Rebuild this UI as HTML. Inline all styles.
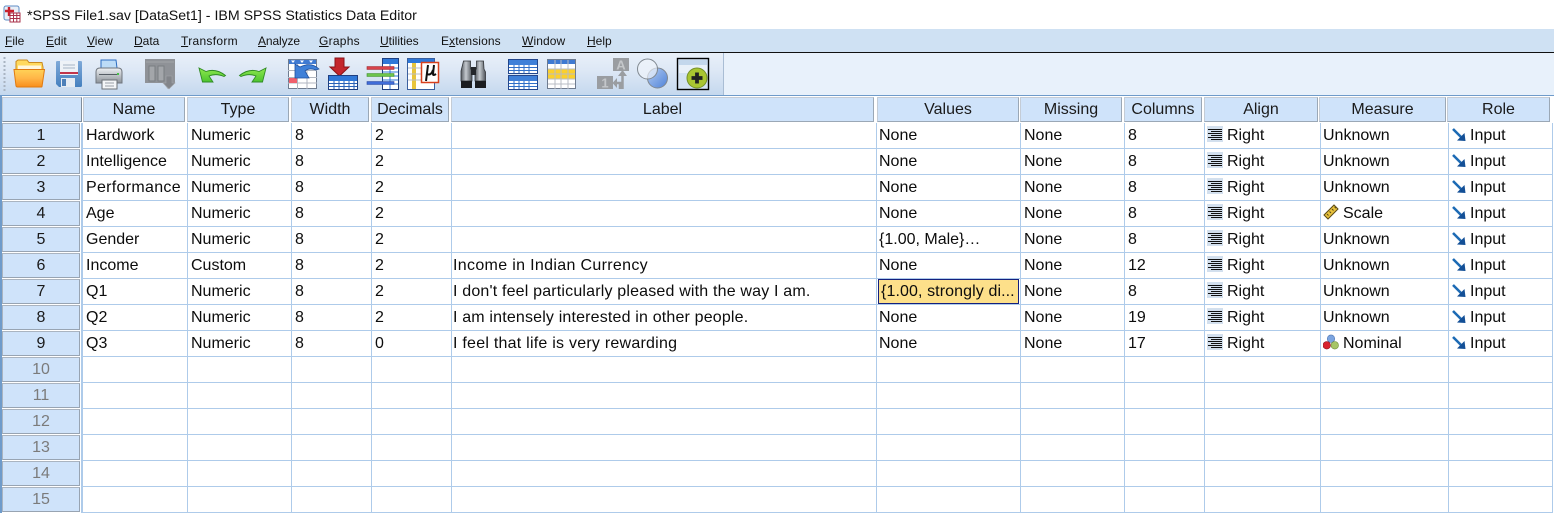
<!DOCTYPE html>
<html><head><meta charset="utf-8"><title>*SPSS File1.sav [DataSet1] - IBM SPSS Statistics Data Editor</title>
<style>
html,body{margin:0;padding:0;width:1554px;height:513px;overflow:hidden;background:#fff;font-family:"Liberation Sans",sans-serif;color:#000}
#title{position:absolute;left:27px;top:7px;font-size:14.18px;line-height:18px;white-space:nowrap;color:#111}
#menu{position:absolute;left:0;top:29px;width:1554px;height:23px;background:#cfe1f3}
#menu span{position:absolute;top:5px;font-size:12px;line-height:15px;white-space:nowrap;color:#111}
#line{position:absolute;left:0;top:52px;width:1554px;height:1px;background:#111}
#tbg{position:absolute;left:0;top:53px;width:1554px;height:42px;background:#e8f1fb}
#tb{position:absolute;left:0;top:53px;width:723px;height:42px;background:linear-gradient(#e9f0f9,#dce7f5 45%,#c5d8ee);border-right:1px solid #a9bdd4}
#tline{position:absolute;left:0;top:95px;width:1554px;height:1px;background:#6f9bca}
#ic{position:absolute;left:0;top:0;width:1554px;height:96px}
table{position:absolute;left:0;top:96px;border-collapse:separate;border-spacing:0;table-layout:fixed;width:1553px;font-size:16px}
td,th{padding:0;height:25px;border-right:1px solid #aecbea;border-bottom:1px solid #aecbea;font-weight:normal;white-space:nowrap;overflow:hidden;line-height:25px;text-align:left;box-sizing:content-box}
tr.h td{height:27px;border:0;padding:0}
td>span{padding-left:3px;display:block;color:#0c0c0c}
td.l>span{padding-left:1px}
td.v>span{padding-left:2px}
td.m>span{padding-left:2px}
.hc{position:absolute;top:97px;box-sizing:border-box;height:25px;background:#cfe3fa;border:1px solid #9ba8b6;border-top-color:#c4ccd6;border-left-color:#c4ccd6;text-align:center;line-height:24px;color:#1a1a1a;font-size:16px}
.rh{box-sizing:border-box;height:25px;margin:0 1px 0 2px;background:#cfe3fa;border:1px solid #98a4b2;border-top-color:#aab4c0;border-left-color:#aab4c0;text-align:center;line-height:23px;color:#1a1a1a}
.rh.e{color:#7b7b7b}
th.r{border-right:2px solid #aecbea;border-bottom:0;background:#fff;height:26px;vertical-align:top}
#bl{position:absolute;left:0;top:96px;width:2px;height:417px;background:#6f9bca}
td>span.sel{box-sizing:border-box;display:block;height:25px;margin:0 1px 0 1px;padding-left:2px;background:#fde08a;border:1px solid #14207e;line-height:23px;white-space:nowrap;overflow:hidden;letter-spacing:.1px}
.i{display:inline-block;vertical-align:-2px;margin-right:4px}
.a{margin-left:-1px}
u{text-decoration:underline}
</style></head><body>
<svg width="0" height="0" style="position:absolute"><defs>
<symbol id="al" viewBox="0 0 16 16"><rect width="16" height="16" fill="#d3e0ee"/><path d="M1 3.500H15M4 5.500H15M1 7.500H15M4 9.500H15M1 11.500H15M4 13.500H15" stroke="#111" stroke-width="1" fill="none"/></symbol>
<symbol id="ro" viewBox="0 0 14 14"><path d="M1 1 9.500 9.500" stroke="#1c6ab4" stroke-width="2.600" fill="none"/><path d="M13.500 13 L5 12.500 L12.500 5Z" fill="#134f96"/></symbol>
<symbol id="sc" viewBox="0 0 16 16"><path d="M1 11 11 1 15 5 5 15Z" fill="#e8c23c" stroke="#5a4a18" stroke-width="1"/><path d="M4 10 5.500 11.500M6.500 7.500 8 9M9 5 10.500 6.500M11.500 2.800 13 4.300" stroke="#5a4a18" stroke-width="1"/></symbol>
<symbol id="no" viewBox="0 0 17 16"><circle cx="8.500" cy="4.500" r="4" fill="#7ba4e0" stroke="#4f74ad" stroke-width=".6"/><circle cx="4" cy="11.500" r="4" fill="#d8222e" stroke="#8f1820" stroke-width=".6"/><circle cx="12.500" cy="11.500" r="4" fill="#a6c566" stroke="#6f8c3c" stroke-width=".6"/></symbol>
</defs></svg>

<svg style="position:absolute;left:3px;top:5px" width="18" height="18" viewBox="0 0 18 18">
<rect x="1" y="1" width="15" height="14" rx="2" fill="#e9eff7" stroke="#5f8dc4"/><path d="M6 2V11M2 6H11" stroke="#c8202e" stroke-width="2.400"/>
<rect x="7" y="8" width="10" height="9" fill="#fff" stroke="#a8304a"/><path d="M7 10.500H17M7 13.500H17M10.500 8V17M13.800 8V17" stroke="#a8304a"/></svg>
<div id="title">*SPSS File1.sav [DataSet1] - IBM SPSS Statistics Data Editor</div>

<div id="menu">
<span style="left:5px"><u>F</u>ile</span>
<span style="left:46px"><u>E</u>dit</span>
<span style="left:87px"><u>V</u>iew</span>
<span style="left:134px"><u>D</u>ata</span>
<span style="left:181px;letter-spacing:.3px"><u>T</u>ransform</span>
<span style="left:258px;letter-spacing:-.1px"><u>A</u>nalyze</span>
<span style="left:319px;letter-spacing:.25px"><u>G</u>raphs</span>
<span style="left:380px"><u>U</u>tilities</span>
<span style="left:441px;letter-spacing:.1px">E<u>x</u>tensions</span>
<span style="left:522px;letter-spacing:.1px"><u>W</u>indow</span>
<span style="left:587px"><u>H</u>elp</span>
</div>
<div id="line"></div><div id="tbg"></div><div id="tb"></div><div id="tline"></div>

<svg id="ic" viewBox="0 0 1554 96">
<defs>
<linearGradient id="fo" x1="0" y1="0" x2="0" y2="1"><stop offset="0" stop-color="#ffd257"/><stop offset=".5" stop-color="#ffb648"/><stop offset="1" stop-color="#f98e1c"/></linearGradient>
<linearGradient id="sv" x1="0" y1="0" x2="0" y2="1"><stop offset="0" stop-color="#7fa9d8"/><stop offset="1" stop-color="#4580bf"/></linearGradient>
<linearGradient id="gr" x1="0" y1="0" x2="0" y2="1"><stop offset="0" stop-color="#8fe84e"/><stop offset="1" stop-color="#4cc42e"/></linearGradient>
<linearGradient id="gy" x1="0" y1="0" x2="0" y2="1"><stop offset="0" stop-color="#eef1f4"/><stop offset="1" stop-color="#8c9299"/></linearGradient>
<linearGradient id="bi" x1="0" y1="0" x2="1" y2="0"><stop offset="0" stop-color="#555a60"/><stop offset=".45" stop-color="#c4c9ce"/><stop offset="1" stop-color="#50555b"/></linearGradient>
<linearGradient id="ci" x1="0" y1="0" x2="1" y2="1"><stop offset="0" stop-color="#b4cdf3"/><stop offset="1" stop-color="#4f82d8"/></linearGradient>
</defs>
<!-- grip -->
<path d="M4.500 57V92" stroke="#a9b4c2" stroke-width="2" stroke-dasharray="2 2"/>
<!-- folder -->
<path d="M16 66V61.500L18 60H27L29 62.500H42L43 67V72H16Z" fill="#ffd95e" stroke="#c98a20"/>
<path d="M18 65.500H41V72H18Z" fill="#fff6dc"/>
<path d="M14 69.500H44.500L42 86.500Q42 87 41 87H17.500Q16.500 87 16 86Z" fill="url(#fo)" stroke="#e07a10"/>
<!-- save -->
<path d="M56 62Q56 61 57.500 61H80.500Q82 61 82 62V85.500Q82 87 80.500 87H59L56 84Z" fill="url(#sv)"/>
<rect x="60" y="61" width="18" height="14" fill="#eef2f7"/>
<path d="M60 73H78" stroke="#c2354b" stroke-width="2"/><path d="M63 65H75M63 68H75" stroke="#a6b4c6"/>
<rect x="61" y="78" width="14" height="9" fill="#e6ecf3"/><rect x="62" y="79" width="4" height="7" fill="#4d7fb8"/>
<!-- printer -->
<path d="M101 68V60H116L117 68Z" fill="#bcdcf7" stroke="#2b6cc0"/>
<path d="M96 72Q96 68 100 68H118Q122 68 122 72V83H96Z" fill="url(#gy)" stroke="#70767e"/>
<path d="M99 74.500H119" stroke="#555c64"/><rect x="117" y="73" width="2" height="2" fill="#47c24a"/>
<rect x="102" y="80" width="15" height="9" fill="#f4f6f8" stroke="#6d7379"/><path d="M105 83H114M105 86H114" stroke="#9aa0a8"/>
<!-- grayed variable -->
<path d="M145 59H175V83H173L168 89 163 83H145Z" fill="#8f9297"/>
<rect x="149" y="66" width="6" height="15" fill="#a3a6aa" stroke="#7a7d82"/><rect x="158" y="66" width="6" height="15" fill="#a3a6aa" stroke="#7a7d82"/>
<path d="M146 62H174" stroke="#a3a6aa"/><path d="M166 76H172V83H175L169 89 163 83H166Z" fill="#82858a" stroke="#a3a6aa" stroke-width=".6"/>
<!-- undo / redo -->
<path d="M199 68 L206 71.500 Q216 68 225.500 75.500 L224 76.500 Q216 73 209 76 L213 82 L202.500 82 Z" fill="url(#gr)" stroke="#2f8a24" stroke-width=".9"/>
<path d="M266 68 L259 71.500 Q249 68 239.500 75.500 L241 76.500 Q249 73 256 76 L252 82 L262.500 82 Z" fill="url(#gr)" stroke="#2f8a24" stroke-width=".9"/>
<!-- go to data -->
<rect x="288.500" y="59.500" width="28" height="29" fill="#fff" stroke="#6f7c90"/>
<rect x="289" y="60" width="27" height="4" fill="#3f7ad2"/>
<path d="M291 60.500H295L293 63ZM300 60.500H304L302 63ZM309 60.500H313L311 63Z" fill="#fff"/>
<path d="M288 70.500H317M288 77.500H317M288 83H317M297.500 64V89M307 64V89" stroke="#b0b6c0"/>
<rect x="289" y="78" width="8" height="5" fill="#f0606c"/>
<path d="M295 64 L300 67 Q311 61.500 319 69 L316 70 Q309 67.500 305 71 L309 78 L295 78 Z" fill="#3f80d8" stroke="#1f4f9c" stroke-width=".8"/>
<!-- import arrow -->
<path d="M335 58H344V67H349L339.500 76 330 67H335Z" fill="#c4262c" stroke="#8a1218"/>
<rect x="328.500" y="75.500" width="29" height="14" fill="#fff" stroke="#1f3f80"/>
<rect x="329" y="76" width="28" height="5" fill="#2f78d8"/>
<path d="M329 83.500H357M329 86.500H357M334 81V89M339 81V89M344 81V89M349 81V89M354 81V89" stroke="#2a62b8"/>
<!-- variables -->
<rect x="382.500" y="58.500" width="16" height="31" fill="#fff" stroke="#1f3f80"/>
<rect x="383" y="59" width="15" height="5" fill="#2f78d8"/>
<path d="M383 68H398M383 72H398M383 76H398M383 80H398M383 84H398M390 64V89" stroke="#2f78d8"/>
<path d="M367 66.500H394V69.500H367Z" fill="#d8424a" stroke="#9a2a30" stroke-width=".6"/><path d="M367 73.500H394V76.500H367Z" fill="#6cc44c" stroke="#3f8a2c" stroke-width=".6"/><path d="M367 81.500H394V84.500H367Z" fill="#3f6cd8" stroke="#2a479c" stroke-width=".6"/>
<!-- mu -->
<rect x="407.500" y="58.500" width="27" height="31" fill="#fff" stroke="#3a5f9e"/>
<rect x="408" y="59" width="26" height="4" fill="#2f78d8"/>
<rect x="412" y="63" width="4" height="26" fill="#e8c53c"/><path d="M408 68H421M408 74H421M408 80H421" stroke="#b7bdc6"/>
<rect x="421.500" y="62.500" width="17" height="20" fill="#fff" stroke="#d8401c" stroke-width="1.500"/>
<path d="M428 65 426 81M427 74Q431 76 433 70M434 65 433 74Q433 76 436 74" stroke="#111" stroke-width="2" fill="none"/>
<!-- binoculars -->
<path d="M463.500 61H470.500V69H472V81H461V71Z" fill="url(#bi)" stroke="#33363a" stroke-width=".8"/>
<path d="M476.500 61H483.500L484 69 485.500 72V81H475V69H476.500Z" fill="url(#bi)" stroke="#33363a" stroke-width=".8"/>
<rect x="471" y="67" width="5" height="8" fill="#24272b"/><rect x="461" y="81" width="11" height="7" fill="#1c1d20"/><rect x="475" y="81" width="11" height="7" fill="#1c1d20"/>
<!-- split -->
<g stroke="#24478c"><rect x="508.500" y="59.500" width="29" height="14" fill="#fff"/><rect x="508.500" y="75.500" width="29" height="14" fill="#fff"/></g>
<rect x="509" y="60" width="28" height="5" fill="#3f80d8"/><rect x="509" y="76" width="28" height="5" fill="#3f80d8"/>
<path d="M509 67.500H537M509 70.500H537M509 83.500H537M509 86.500H537M514 65V73M519 65V73M524 65V73M529 65V73M514 81V89M519 81V89M524 81V89M529 81V89" stroke="#2f6fc8"/>
<!-- select -->
<rect x="547.500" y="59.500" width="28" height="29" fill="#fff" stroke="#6f7c90"/>
<rect x="548" y="60" width="27" height="4" fill="#3f7ad2"/>
<rect x="548" y="69" width="27" height="10" fill="#fbd02c"/>
<path d="M548 69H575M548 74H575M548 79H575M548 84H575M555 60V89M561 60V89M568 60V89" stroke="#b8bcc4"/>
<!-- grayed 1A -->
<rect x="613" y="58" width="16" height="13" fill="#9a9da1"/>
<text x="621" y="69.500" text-anchor="middle" font-family="Liberation Sans" font-weight="bold" font-size="13" fill="#c4c7ca">A</text>
<rect x="597" y="76" width="16" height="13" fill="#9a9da1"/>
<text x="605" y="87.500" text-anchor="middle" font-family="Liberation Sans" font-weight="bold" font-size="13" fill="#c4c7ca">1</text>
<path d="M622.500 89V74M620 89V83H616" stroke="#9a9da1" stroke-width="2.500" fill="none"/>
<path d="M618 76 622.500 70 627 76ZM617 78 612.500 83 617 88Z" fill="#9a9da1"/>
<!-- circles -->
<circle cx="657.500" cy="78" r="10" fill="url(#ci)" stroke="#808890"/>
<circle cx="647.500" cy="69" r="10" fill="#f0f4fa" fill-opacity=".65" stroke="#808890"/>
<!-- add-on -->
<rect x="677.500" y="58.500" width="31" height="31" fill="#d3e2f3" stroke="#000" stroke-width="1.400"/>
<rect x="679" y="60" width="28" height="5" fill="#c3d7ec"/><rect x="679" y="65" width="28" height="8" fill="#e8f0f9"/>
<circle cx="697" cy="78" r="10" fill="#a9c531" stroke="#75902a"/>
<path d="M697 72.500V83.500M691.500 78H702.500" stroke="#222" stroke-width="3.800"/>
</svg>

<table>
<colgroup><col style="width:83px"><col style="width:105px"><col style="width:104px"><col style="width:80px"><col style="width:80px"><col style="width:425px"><col style="width:144px"><col style="width:104px"><col style="width:80px"><col style="width:116px"><col style="width:128px"><col style="width:104px"></colgroup>
<tr class="h"><td colspan="12"></td></tr>

<tr><th class="r"><div class="rh">1</div></th><td><span>Hardwork</span></td><td><span>Numeric</span></td><td><span>8</span></td><td><span>2</span></td><td class="l"><span></span></td><td class="v"><span>None</span></td><td><span>None</span></td><td><span>8</span></td><td><span><svg class="i a" width="16" height="16"><use href="#al"/></svg>Right</span></td><td class="m"><span>Unknown</span></td><td><span><svg class="i" width="14" height="14"><use href="#ro"/></svg>Input</span></td></tr>
<tr><th class="r"><div class="rh">2</div></th><td><span>Intelligence</span></td><td><span>Numeric</span></td><td><span>8</span></td><td><span>2</span></td><td class="l"><span></span></td><td class="v"><span>None</span></td><td><span>None</span></td><td><span>8</span></td><td><span><svg class="i a" width="16" height="16"><use href="#al"/></svg>Right</span></td><td class="m"><span>Unknown</span></td><td><span><svg class="i" width="14" height="14"><use href="#ro"/></svg>Input</span></td></tr>
<tr><th class="r"><div class="rh">3</div></th><td><span style="letter-spacing:.3px">Performance</span></td><td><span>Numeric</span></td><td><span>8</span></td><td><span>2</span></td><td class="l"><span></span></td><td class="v"><span>None</span></td><td><span>None</span></td><td><span>8</span></td><td><span><svg class="i a" width="16" height="16"><use href="#al"/></svg>Right</span></td><td class="m"><span>Unknown</span></td><td><span><svg class="i" width="14" height="14"><use href="#ro"/></svg>Input</span></td></tr>
<tr><th class="r"><div class="rh">4</div></th><td><span>Age</span></td><td><span>Numeric</span></td><td><span>8</span></td><td><span>2</span></td><td class="l"><span></span></td><td class="v"><span>None</span></td><td><span>None</span></td><td><span>8</span></td><td><span><svg class="i a" width="16" height="16"><use href="#al"/></svg>Right</span></td><td class="m"><span><svg class="i" width="16" height="16"><use href="#sc"/></svg>Scale</span></td><td><span><svg class="i" width="14" height="14"><use href="#ro"/></svg>Input</span></td></tr>
<tr><th class="r"><div class="rh">5</div></th><td><span>Gender</span></td><td><span>Numeric</span></td><td><span>8</span></td><td><span>2</span></td><td class="l"><span></span></td><td class="v"><span>{1.00, Male}…</span></td><td><span>None</span></td><td><span>8</span></td><td><span><svg class="i a" width="16" height="16"><use href="#al"/></svg>Right</span></td><td class="m"><span>Unknown</span></td><td><span><svg class="i" width="14" height="14"><use href="#ro"/></svg>Input</span></td></tr>
<tr><th class="r"><div class="rh">6</div></th><td><span>Income</span></td><td><span>Custom</span></td><td><span>8</span></td><td><span>2</span></td><td class="l"><span style="letter-spacing:.33px">Income in Indian Currency</span></td><td class="v"><span>None</span></td><td><span>None</span></td><td><span>12</span></td><td><span><svg class="i a" width="16" height="16"><use href="#al"/></svg>Right</span></td><td class="m"><span>Unknown</span></td><td><span><svg class="i" width="14" height="14"><use href="#ro"/></svg>Input</span></td></tr>
<tr><th class="r"><div class="rh">7</div></th><td><span>Q1</span></td><td><span>Numeric</span></td><td><span>8</span></td><td><span>2</span></td><td class="l"><span style="letter-spacing:.18px">I don't feel particularly pleased with the way I am.</span></td><td class="v"><span class="sel">{1.00, strongly di...</span></td><td><span>None</span></td><td><span>8</span></td><td><span><svg class="i a" width="16" height="16"><use href="#al"/></svg>Right</span></td><td class="m"><span>Unknown</span></td><td><span><svg class="i" width="14" height="14"><use href="#ro"/></svg>Input</span></td></tr>
<tr><th class="r"><div class="rh">8</div></th><td><span>Q2</span></td><td><span>Numeric</span></td><td><span>8</span></td><td><span>2</span></td><td class="l"><span style="letter-spacing:.17px">I am intensely interested in other people.</span></td><td class="v"><span>None</span></td><td><span>None</span></td><td><span>19</span></td><td><span><svg class="i a" width="16" height="16"><use href="#al"/></svg>Right</span></td><td class="m"><span>Unknown</span></td><td><span><svg class="i" width="14" height="14"><use href="#ro"/></svg>Input</span></td></tr>
<tr><th class="r"><div class="rh">9</div></th><td><span>Q3</span></td><td><span>Numeric</span></td><td><span>8</span></td><td><span>0</span></td><td class="l"><span style="letter-spacing:.24px">I feel that life is very rewarding</span></td><td class="v"><span>None</span></td><td><span>None</span></td><td><span>17</span></td><td><span><svg class="i a" width="16" height="16"><use href="#al"/></svg>Right</span></td><td class="m"><span><svg class="i" width="16" height="16"><use href="#no"/></svg>Nominal</span></td><td><span><svg class="i" width="14" height="14"><use href="#ro"/></svg>Input</span></td></tr>
<tr><th class="r"><div class="rh e">10</div></th><td></td><td></td><td></td><td></td><td></td><td></td><td></td><td></td><td></td><td></td><td></td></tr>
<tr><th class="r"><div class="rh e">11</div></th><td></td><td></td><td></td><td></td><td></td><td></td><td></td><td></td><td></td><td></td><td></td></tr>
<tr><th class="r"><div class="rh e">12</div></th><td></td><td></td><td></td><td></td><td></td><td></td><td></td><td></td><td></td><td></td><td></td></tr>
<tr><th class="r"><div class="rh e">13</div></th><td></td><td></td><td></td><td></td><td></td><td></td><td></td><td></td><td></td><td></td><td></td></tr>
<tr><th class="r"><div class="rh e">14</div></th><td></td><td></td><td></td><td></td><td></td><td></td><td></td><td></td><td></td><td></td><td></td></tr>
<tr><th class="r"><div class="rh e">15</div></th><td></td><td></td><td></td><td></td><td></td><td></td><td></td><td></td><td></td><td></td><td></td></tr>
</table>
<div id="bl"></div>
<div class="hc" style="left:2px;width:80px;border-right-color:#7f8d9c;border-bottom-color:#7f8d9c"></div>
<div class="hc" style="left:83px;width:102px">Name</div>
<div class="hc" style="left:187px;width:102px">Type</div>
<div class="hc" style="left:291px;width:78px">Width</div>
<div class="hc" style="left:371px;width:78px">Decimals</div>
<div class="hc" style="left:451px;width:423px">Label</div>
<div class="hc" style="left:877px;width:142px">Values</div>
<div class="hc" style="left:1020px;width:102px">Missing</div>
<div class="hc" style="left:1124px;width:78px">Columns</div>
<div class="hc" style="left:1204px;width:114px">Align</div>
<div class="hc" style="left:1319px;width:127px">Measure</div>
<div class="hc" style="left:1447px;width:103px">Role</div>
</body></html>
